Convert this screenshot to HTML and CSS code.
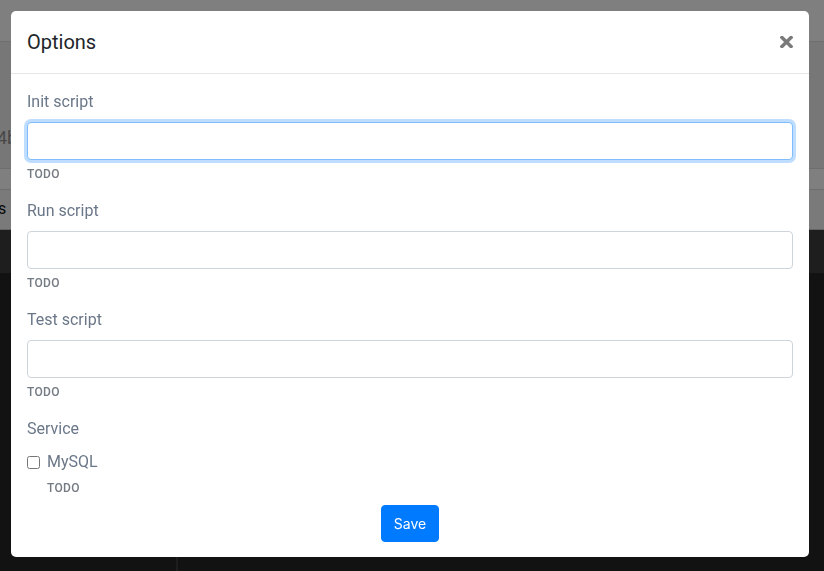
FILE: index.html
```html
<!DOCTYPE html>
<html lang="en">
<head>
<meta charset="utf-8">
<title>Options</title>
<link rel="stylesheet" href="styles.css">
</head>
<body>
<div class="page">
  <div class="topbar"></div>
  <div class="hero"><span class="hero-text">4b</span></div>
  <div class="tabs"></div>
  <div class="toolbar"><span class="toolbar-text">s</span></div>
  <div class="dark">
    <div class="dark-head"></div>
    <div class="dark-body">
      <div class="sidebar"></div>
      <div class="main"></div>
    </div>
  </div>
</div>
<div class="backdrop"></div>
<div class="modal">
  <div class="modal-content">
    <div class="modal-header">
      <h5 class="modal-title">Options</h5>
      <button class="close" type="button" aria-label="Close">
        <svg width="13" height="12" viewBox="0 0 13 12"><path d="M2 1.5 L11 10.5 M11 1.5 L2 10.5" stroke="#7a7a7a" stroke-width="3.4" stroke-linecap="square"/></svg>
      </button>
    </div>
    <div class="modal-body">
      <div class="form-group">
        <label class="label">Init script</label>
        <input class="form-control focused" type="text">
        <small class="help">TODO</small>
      </div>
      <div class="form-group">
        <label class="label">Run script</label>
        <input class="form-control" type="text">
        <small class="help">TODO</small>
      </div>
      <div class="form-group">
        <label class="label">Test script</label>
        <input class="form-control" type="text">
        <small class="help">TODO</small>
      </div>
      <div class="form-group last">
        <label class="label">Service</label>
        <div class="check">
          <input class="check-input" type="checkbox" id="mysql">
          <div class="check-text">
            <label class="check-label" for="mysql">MySQL</label>
            <small class="help">TODO</small>
          </div>
        </div>
      </div>
      <div class="actions">
        <button class="btn" type="button">Save</button>
      </div>
    </div>
  </div>
</div>
</body>
</html>
```

FILE: styles.css
```css
* { box-sizing: border-box; }
html, body { margin: 0; padding: 0; }
body {
  width: 824px;
  height: 571px;
  overflow: hidden;
  font-family: Roboto, "Liberation Sans", sans-serif;
  background: #242424;
}
.page { display: flex; flex-direction: column; height: 571px; }
.topbar { height: 42px; background: #ffffff; border-bottom: 1px solid #dcdcdc; }
.hero { height: 126px; background: #eeeeee; display: flex; align-items: center; }
.hero-text { font-size: 18px; color: #909090; margin-left: -3px; margin-top: 64px; }
.tabs { height: 22px; background: #fff; border-top: 1px solid #dcdcdc; border-bottom: 1px solid #dcdcdc; }
.toolbar { height: 40px; background: #f4f4f4; border-bottom: 1px solid #c8c8c8; display: flex; align-items: center; }
.toolbar-text { font-size: 16px; color: #111; margin-left: -2px; margin-top: -2px; }
.dark { flex: 1; display: flex; flex-direction: column; }
.dark-head { height: 43px; background: #3c3c3c; }
.dark-body { flex: 1; display: flex; background: #242424; }
.sidebar { width: 178px; border-right: 2px solid #3a3a3a; }
.main { flex: 1; }
.backdrop { position: fixed; inset: 0; background: rgba(0, 0, 0, 0.5); }
.modal { position: fixed; top: 11px; left: 11px; width: 798px; }
.modal-content {
  background: #fff;
  border-radius: 5px;
  display: flex;
  flex-direction: column;
}
.modal-header {
  display: flex;
  align-items: center;
  justify-content: space-between;
  padding: 16px 16px;
  border-bottom: 1px solid #e6e6e6;
}
.modal-title {
  margin: 0;
  font-size: 20px;
  line-height: 30px;
  font-weight: 400;
  color: #212529;
}
.close {
  border: 0;
  background: none;
  padding: 0;
  width: 13px;
  height: 12px;
  display: flex;
  margin-top: -1px;
}
.modal-body { padding: 16px 16px 15px; }
.form-group { display: flex; flex-direction: column; margin-bottom: 16px; }
.form-group.last { margin-bottom: 8px; }
.label {
  font-size: 16px;
  line-height: 24px;
  color: #6a7788;
  margin-bottom: 8px;
}
.form-control {
  width: 766px;
  height: 38px;
  border: 1px solid #ced4da;
  border-radius: 4px;
  padding: 6px 12px;
  font-size: 16px;
  background: #fff;
  margin: 0;
}
.form-control.focused {
  border-color: #80bdff;
  box-shadow: 0 0 0 3px rgba(0, 123, 255, 0.25);
}
.help {
  display: block;
  margin-top: 5px;
  font-size: 12px;
  line-height: 18px;
  font-weight: 500;
  color: #737a82;
  letter-spacing: 0.3px;
}
.check { display: flex; align-items: flex-start; padding-top: 1px; }
.check-input {
  width: 13px;
  height: 13px;
  margin: 6px 7px 0 0;
}
.check-text { display: flex; flex-direction: column; }
.check-label { font-size: 16px; line-height: 24px; color: #6a7788; }
.actions { display: flex; justify-content: center; }
.btn {
  background: #007bff;
  color: #fff;
  border: 1px solid #007bff;
  border-radius: 4px;
  height: 37px;
  padding: 0 12px;
  font-family: Inter, Roboto, sans-serif;
  font-size: 14px;
  line-height: 35px;
}
```
